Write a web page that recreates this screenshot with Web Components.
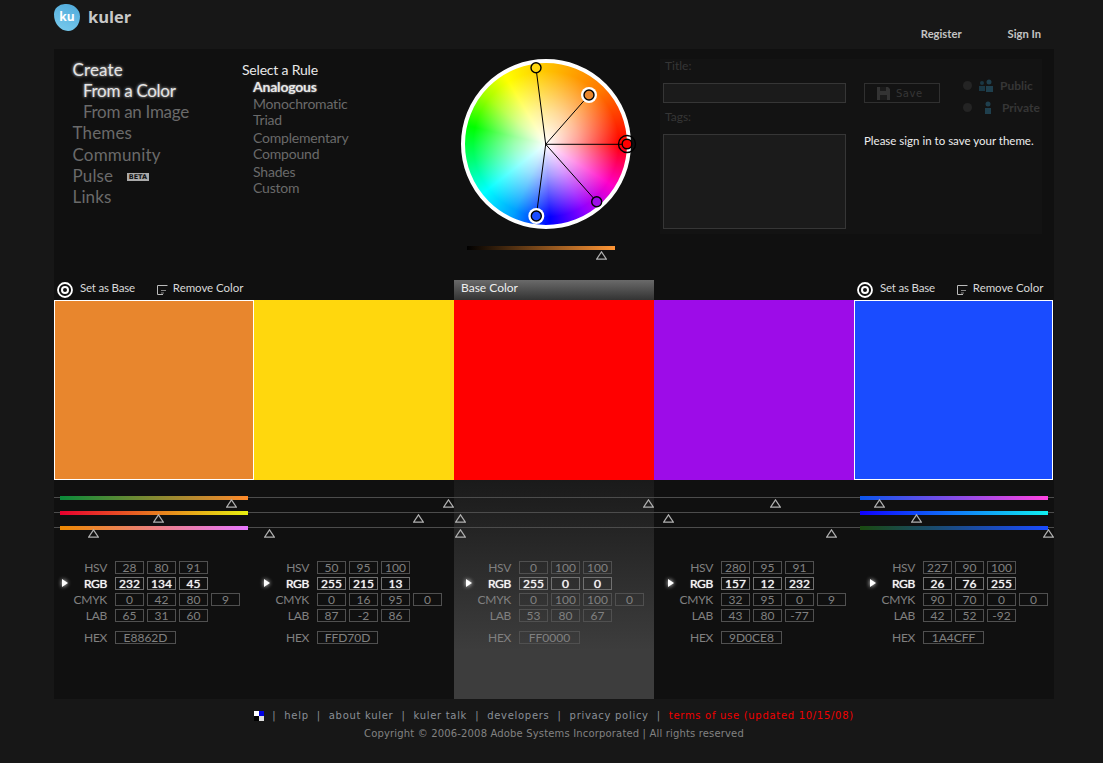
<!DOCTYPE html>
<html>
<head>
<meta charset="utf-8">
<title>kuler</title>
<style>
  html, body { margin: 0; padding: 0; background: #171717; }
  body { font-family: "Lato", "Open Sans", sans-serif; }
</style>
</head>
<body>
<kuler-app></kuler-app>

<script>
const triangle = (stroke = '#b0b0b0') => `<svg width="11" height="9" viewBox="0 0 11 9"><path d="M5.5 .8 L10.4 8.2 H.6 Z" fill="none" stroke="${stroke}" stroke-width="1.2"/></svg>`;

class KulerHeader extends HTMLElement {
  constructor() {
    super();
    this.attachShadow({ mode: 'open' }).innerHTML = `
      <style>
        :host { display: flex; height: 49px; width: 1000px; margin-left: 54px; box-sizing: border-box; padding-right: 13px; font-family: "Lato", sans-serif; }
        .logo { display: flex; align-items: flex-start; flex: 1; padding-top: 4px; }
        .blob { width: 26px; height: 27px; border-radius: 42% 52% 46% 54% / 38% 46% 54% 62%; background: linear-gradient(200deg, #4fa9da, #7accee); color: #fff; font: bold 12px/25px "Open Sans", sans-serif; text-align: center; }
        .name { margin: 0 0 0 8px; font: bold 16.5px/26px "Open Sans", sans-serif; color: #c8c8c8; }
        nav { display: flex; gap: 46px; padding-top: 27px; font-size: 11.2px; line-height: 14px; font-weight: bold; color: #c4c4c4; }
      </style>
      <div class="logo"><div class="blob">ku</div><p class="name">kuler</p></div>
      <nav><span>Register</span><span>Sign In</span></nav>
    `;
  }
}

class KulerMenu extends HTMLElement {
  constructor() {
    super();
    this.attachShadow({ mode: 'open' }).innerHTML = `
      <style>
        :host { display: block; width: 188px; box-sizing: border-box; padding: 10px 0 0 18px; font-size: 17px; letter-spacing: -.3px; line-height: 21.15px; color: #6a6a6a; }
        div { white-space: nowrap; }
        .on { color: #e4e4e4; text-shadow: 0 0 3px rgba(255,255,255,.8); }
        .sub { padding-left: 11px; }
        .main { letter-spacing: .15px; padding-left: .5px; }
        .beta { display: inline-block; margin-left: 9px; vertical-align: 3px; padding: 0 2px; background: #aaa; color: #111; font: bold 6.5px/8px "DejaVu Sans", sans-serif; letter-spacing: 0; }
      </style>
      <div class="main on">Create</div>
      <div class="sub on">From a Color</div>
      <div class="sub">From an Image</div>
      <div class="main">Themes</div>
      <div class="main">Community</div>
      <div class="main">Pulse <span class="beta">BETA</span></div>
      <div class="main">Links</div>
    `;
  }
}

class KulerRules extends HTMLElement {
  constructor() {
    super();
    this.attachShadow({ mode: 'open' }).innerHTML = `
      <style>
        :host { display: block; width: 219px; box-sizing: border-box; padding-top: 13px; font-size: 14px; letter-spacing: -.2px; line-height: 16px; color: #6a6a6a; }
        .head { color: #e8e8e8; margin-bottom: 1px; }
        ul { list-style: none; margin: 0; padding: 0 0 0 11px; }
        li { white-space: nowrap; }
        li:nth-child(even) { margin-top: 1px; }
        li:nth-child(odd) { margin-top: 0; }
        .on { color: #e8e8e8; font-weight: bold; text-shadow: 0 0 2px rgba(255,255,255,.6); }
      </style>
      <div class="head">Select a Rule</div>
      <ul>
        <li class="on">Analogous</li>
        <li>Monochromatic</li>
        <li>Triad</li>
        <li style="margin-top:2px">Complementary</li>
        <li style="margin-top:0">Compound</li>
        <li style="margin-top:2px">Shades</li>
        <li style="margin-top:0">Custom</li>
      </ul>
    `;
  }
}

class KulerWheel extends HTMLElement {
  constructor() {
    super();
    this.attachShadow({ mode: 'open' }).innerHTML = `
      <style>
        :host { display: block; width: 199px; box-sizing: border-box; padding-top: 10px; }
        .wheel { position: relative; width: 170px; height: 170px; box-sizing: border-box; border: 4px solid #fff; border-radius: 50%;
          background:
            radial-gradient(circle closest-side, #fff 0%, rgba(255,255,255,.6) 40%, rgba(255,255,255,0) 90%),
            conic-gradient(#ffc400 0deg, #ff7a00 45deg, #f00 90deg, #ff00c8 122deg, #9000ff 150deg, #0000ff 177deg, #00a0ff 205deg, #00ffff 232deg, #00ff70 258deg, #00ff00 283deg, #a0ff00 308deg, #ffff00 329deg, #ffc400 360deg); }
        svg.marks { position: absolute; left: -4px; top: -4px; overflow: visible; }
        .brightness { width: 148px; height: 4px; margin: 17px 0 0 6px; background: linear-gradient(90deg, #000, #ff9636); }
        .thumb { display: block; margin: 1px 0 0 135px; line-height: 0; }
      </style>
      <div class="wheel">
        <svg class="marks" width="170" height="170" viewBox="461 59 170 170" fill="none" stroke="#000">
          <g stroke-width="1">
            <path d="M545.7 144.3 L536 68"/>
            <path d="M545.7 144.3 L589 95"/>
            <path d="M545.7 144.3 L627 144.3"/>
            <path d="M545.7 144.3 L596.7 201.7"/>
            <path d="M545.7 144.3 L536.3 216"/>
          </g>
          <circle cx="589" cy="95" r="8" fill="#fff" stroke="none"/>
          <circle cx="536.3" cy="216" r="8" fill="#fff" stroke="none"/>
          <circle cx="627" cy="144" r="8.5" stroke-width="1.4"/>
          <circle cx="536" cy="67.7" r="5" fill="#ffd70d" stroke-width="1.4"/>
          <circle cx="589" cy="95" r="5" fill="#e8862d" stroke-width="1.4"/>
          <circle cx="627" cy="144" r="4.8" fill="#f00" stroke-width="1.4"/>
          <circle cx="596.7" cy="201.7" r="5" fill="#9d0ce8" stroke-width="1.4"/>
          <circle cx="536.3" cy="216" r="5" fill="#1a4cff" stroke-width="1.4"/>
        </svg>
      </div>
      <div class="brightness"></div>
      <span class="thumb">${triangle()}</span>
    `;
  }
}

class KulerSaveForm extends HTMLElement {
  constructor() {
    super();
    this.attachShadow({ mode: 'open' }).innerHTML = `
      <style>
        :host { display: flex; width: 382px; height: 175px; margin-top: 10px; box-sizing: border-box; padding-left: 3px; background: #131313; font-size: 12px; color: #363636; }
        .fields { width: 183px; }
        label { display: block; padding-left: 2px; line-height: 14px; }
        .title { height: 24px; }
        .tags { height: 24px; padding-top: 7px; }
        .box { box-sizing: border-box; width: 183px; background: #1b1b1b; border: 1px solid #363636; }
        .input { height: 20px; }
        .area { height: 95px; }
        .side { margin-left: 18px; flex: 1; }
        .top { display: flex; height: 75px; }
        .save { box-sizing: border-box; width: 76px; height: 20px; margin-top: 24px; display: flex; align-items: center; gap: 6px; padding-left: 12px; border: 1px solid #303030; font: 10px "DejaVu Sans", sans-serif; letter-spacing: .5px; color: #363636; }
        .vis { margin-left: 23px; padding-top: 16px; font-weight: bold; }
        .opt { display: flex; align-items: center; height: 21.5px; }
        .radio { width: 9px; height: 9px; border-radius: 50%; background: #242424; flex: none; }
        .opt svg { margin-left: 6px; flex: none; }
        .opt span { margin-left: 6px; }
        .opt .pr { margin-left: 8px; }
        p { margin: 0; color: #eee; font-size: 11.5px; line-height: 14px; white-space: nowrap; }
      </style>
      <div class="fields">
        <label class="title">Title:</label>
        <div class="box input"></div>
        <label class="tags">Tags:</label>
        <div class="box area"></div>
      </div>
      <div class="side">
        <div class="top">
          <div class="save">
            <svg width="13" height="13" viewBox="0 0 13 13"><path d="M0 0H11L13 2V13H0Z" fill="#333"/><path d="M3 0H9V4H3Z" fill="#1b1b1b"/><path d="M3 8H10V13H3Z" fill="#1b1b1b"/></svg>
            Save
          </div>
          <div class="vis">
            <div class="opt"><i class="radio"></i>
              <svg width="16" height="13" viewBox="0 0 16 13"><circle cx="4" cy="4" r="2" fill="#1a3744"/><path d="M1 12V7H7V12Z" fill="#1a3744"/><circle cx="11" cy="3" r="2.5" fill="#1f3f4d"/><path d="M8 13V7H15V13Z" fill="#1f3f4d"/></svg>
              <span>Public</span></div>
            <div class="opt"><i class="radio"></i>
              <svg width="16" height="13" viewBox="0 0 16 13"><circle cx="10" cy="3" r="2.5" fill="#1f3f4d"/><path d="M7 13V7H13V13Z" fill="#1f3f4d"/></svg>
              <span class="pr">Private</span></div>
          </div>
        </div>
        <p>Please sign in to save your theme.</p>
      </div>
    `;
  }
}

class KulerActions extends HTMLElement {
  constructor() {
    super();
    const group = (col) => `
      <div class="acts" style="grid-column:${col}">
        <svg width="16" height="16" viewBox="0 0 16 16" fill="none" stroke="#fff"><circle cx="8" cy="8" r="7" stroke-width="1.8"/><circle cx="8" cy="8" r="3" stroke-width="2"/></svg>
        <span class="base">Set as Base</span>
        <svg class="rm" width="11" height="10" viewBox="0 0 11 10" fill="none" stroke="#bbb"><path d="M10.5 .5H.5V9.5H6"/><path d="M4 5.5H9M4 8H7" stroke="#888"/></svg>
        <span class="remove">Remove Color</span>
      </div>`;
    this.attachShadow({ mode: 'open' }).innerHTML = `
      <style>
        :host { display: grid; grid-template-columns: repeat(5, 200px); height: 20px; font-size: 11.5px; letter-spacing: -.2px; color: #d8d8d8; }
        .acts { display: flex; align-items: center; height: 20px; padding-left: 3px; white-space: nowrap; }
        .base { margin: 0 0 5px 7px; }
        .remove { margin-bottom: 5px; letter-spacing: -.05px; }
        .rm { margin: 0 5px 0 22px; }
        .tab { grid-column: 3; background: linear-gradient(#6a6a6a, #333); color: #eee; font-size: 12px; letter-spacing: 0; line-height: 16px; padding-left: 7px; }
      </style>
      ${group(1)}
      <div class="tab">Base Color</div>
      ${group(5)}
    `;
  }
}

class KulerSwatch extends HTMLElement {
  static get observedAttributes() { return ['color']; }
  constructor() {
    super();
    this.attachShadow({ mode: 'open' }).innerHTML = `
      <style>
        :host { display: block; height: 180px; box-sizing: border-box; }
        :host([outlined]) { border: 1px solid #fff; }
        :host(:last-child) { margin-right: 1px; }
      </style>
    `;
  }
  attributeChangedCallback(name, old, value) {
    this.style.background = value;
  }
}

class KulerSliders extends HTMLElement {
  constructor() {
    super();
    const rows = [
      { bars: ['#0a8a3a,#ff8a2a', '#0a55ee,#ff44e0'], thumbs: [177, 394, 594, 721, 825] },
      { bars: ['#e8002e,#e8f010', '#1000ff,#10f0f0'], thumbs: [104, 364, 406, 614, 862] },
      { bars: ['#ee8800,#e878ff', '#1a4a10,#1a4cff'], thumbs: [39, 215, 406, 777, 994] }
    ];
    const html = rows.map(r => `
      <div class="row">
        <div class="bars"><i style="background:linear-gradient(90deg,${r.bars[0]})"></i><i style="background:linear-gradient(90deg,${r.bars[1]})"></i></div>
        ${r.thumbs.map(x => `<span class="thumb" style="left:${x - 5.5}px">${triangle()}</span>`).join('')}
      </div>`).join('');
    this.attachShadow({ mode: 'open' }).innerHTML = `
      <style>
        :host { display: block; padding-top: 10px; height: 70px; box-sizing: border-box; }
        .row { position: relative; height: 15px; background: linear-gradient(#4c4c4c, #4c4c4c) 0 7px / 100% 1px no-repeat; }
        .bars { display: flex; justify-content: space-between; padding: 6px 6px 0; }
        .bars i { display: block; width: 188px; height: 4px; }
        .thumb { position: absolute; top: 9px; line-height: 0; }
      </style>
      ${html}
    `;
  }
}

class KulerValues extends HTMLElement {
  constructor() {
    super();
    this.attachShadow({ mode: 'open' });
  }
  connectedCallback() {
    const a = n => (this.getAttribute(n) || '').split(',');
    const line = (label, vals, cls = '') => `
      <div class="row ${cls}"><span class="lab">${label}</span>${vals.map(v => `<span class="box">${v}</span>`).join('')}</div>`;
    this.shadowRoot.innerHTML = `
      <style>
        :host { display: block; box-sizing: border-box; padding-top: 11px; padding-left: var(--shift, 0px); font-size: 12px; color: #808080; }
        .row { display: flex; gap: 3px; height: 13px; margin-bottom: 3px; line-height: 13px; position: relative; }
        .lab { width: 53px; margin-right: 5px; text-align: right; white-space: nowrap; letter-spacing: -.3px; }
        .box { box-sizing: border-box; width: 29px; height: 13px; line-height: 11px; border: 1px solid #505050; text-align: center; }
        .cur { color: #f4f4f4; text-shadow: 0 0 1px #fff; }
        .cur .box { border-color: #707070; }
        .hex { margin-top: 9px; }
        .hex .box { width: 61px; }
        .go { position: absolute; left: 8px; top: 2px; line-height: 0; }
        .go svg { display: block; filter: drop-shadow(0 0 2px #fff); }
      </style>
      ${line('HSV', a('hsv'))}
      <div class="row cur"><span class="go"><svg width="6" height="8" viewBox="0 0 6 8"><path d="M0 0L6 4L0 8Z" fill="#fff"/></svg></span><span class="lab">RGB</span>${a('rgb').map(v => `<span class="box">${v}</span>`).join('')}</div>
      ${line('CMYK', a('cmyk'))}
      ${line('LAB', a('lab'))}
      ${line('HEX', a('hex'), 'hex')}
    `;
  }
}

class KulerFooter extends HTMLElement {
  constructor() {
    super();
    const links = ['help', 'about kuler', 'kuler talk', 'developers', 'privacy policy'];
    this.attachShadow({ mode: 'open' }).innerHTML = `
      <style>
        :host { display: block; width: 1103px; padding-top: 9px; font: 10px/16px "DejaVu Sans", sans-serif; letter-spacing: .16px; color: #828282; text-align: center; }
        .links { display: flex; justify-content: center; align-items: center; gap: 8px; height: 16px; margin-left: 5px; letter-spacing: .7px; color: #8a8f96; }
        .sq { display: grid; grid-template-columns: 5px 5px; grid-auto-rows: 5px; }
        .sq i:nth-child(1) { background: #fff; } .sq i:nth-child(2) { background: #0000e0; }
        .sq i:nth-child(3) { background: #000; } .sq i:nth-child(4) { background: #ddd; }
        .red { color: #f00000; }
        .copy { margin: 2px 0 0 5px; }
      </style>
      <div class="links">
        <span class="sq"><i></i><i></i><i></i><i></i></span>
        ${links.map(l => `<span>|</span><span>${l}</span>`).join('')}
        <span>|</span><span class="red">terms of use (updated 10/15/08)</span>
      </div>
      <div class="copy">Copyright © 2006-2008 Adobe Systems Incorporated | All rights reserved</div>
    `;
  }
}

class KulerApp extends HTMLElement {
  constructor() {
    super();
    const themes = [
      { color: '#E8862D', outlined: true, hsv: '28,80,91', rgb: '232,134,45', cmyk: '0,42,80,9', lab: '65,31,60', hex: 'E8862D' },
      { color: '#FFD70D', hsv: '50,95,100', rgb: '255,215,13', cmyk: '0,16,95,0', lab: '87,-2,86', hex: 'FFD70D' },
      { color: '#FF0000', hsv: '0,100,100', rgb: '255,0,0', cmyk: '0,100,100,0', lab: '53,80,67', hex: 'FF0000' },
      { color: '#9D0CE8', hsv: '280,95,91', rgb: '157,12,232', cmyk: '32,95,0,9', lab: '43,80,-77', hex: '9D0CE8' },
      { color: '#1A4CFF', outlined: true, hsv: '227,90,100', rgb: '26,76,255', cmyk: '90,70,0,0', lab: '42,52,-92', hex: '1A4CFF' }
    ];
    this.attachShadow({ mode: 'open' }).innerHTML = `
      <style>
        :host { display: block; font-family: "Lato", "Open Sans", sans-serif; }
        .panel { width: 1000px; height: 650px; margin-left: 54px; background: #101010; }
        .top { display: flex; height: 231px; }
        .swatches, .values { display: grid; grid-template-columns: repeat(5, 200px); }
        .lower { height: 219px; background: linear-gradient(#1a1a1a, #3d3d3d 78%, #3d3d3d) 400px 0 / 200px 100% no-repeat; }
      </style>
      <kuler-header></kuler-header>
      <div class="panel">
        <div class="top">
          <kuler-menu></kuler-menu>
          <kuler-rules></kuler-rules>
          <kuler-wheel></kuler-wheel>
          <kuler-save-form></kuler-save-form>
        </div>
        <kuler-actions></kuler-actions>
        <div class="swatches">
          ${themes.map(t => `<kuler-swatch color="${t.color}" ${t.outlined ? 'outlined' : ''}></kuler-swatch>`).join('')}
        </div>
        <div class="lower">
          <kuler-sliders></kuler-sliders>
          <div class="values">
            ${themes.map((t, i) => `<kuler-values style="--shift:${i * 2}px" hsv="${t.hsv}" rgb="${t.rgb}" cmyk="${t.cmyk}" lab="${t.lab}" hex="${t.hex}"></kuler-values>`).join('')}
          </div>
        </div>
      </div>
      <kuler-footer></kuler-footer>
    `;
  }
}

customElements.define('kuler-header', KulerHeader);
customElements.define('kuler-menu', KulerMenu);
customElements.define('kuler-rules', KulerRules);
customElements.define('kuler-wheel', KulerWheel);
customElements.define('kuler-save-form', KulerSaveForm);
customElements.define('kuler-actions', KulerActions);
customElements.define('kuler-swatch', KulerSwatch);
customElements.define('kuler-sliders', KulerSliders);
customElements.define('kuler-values', KulerValues);
customElements.define('kuler-footer', KulerFooter);
customElements.define('kuler-app', KulerApp);
</script>
</body>
</html>
